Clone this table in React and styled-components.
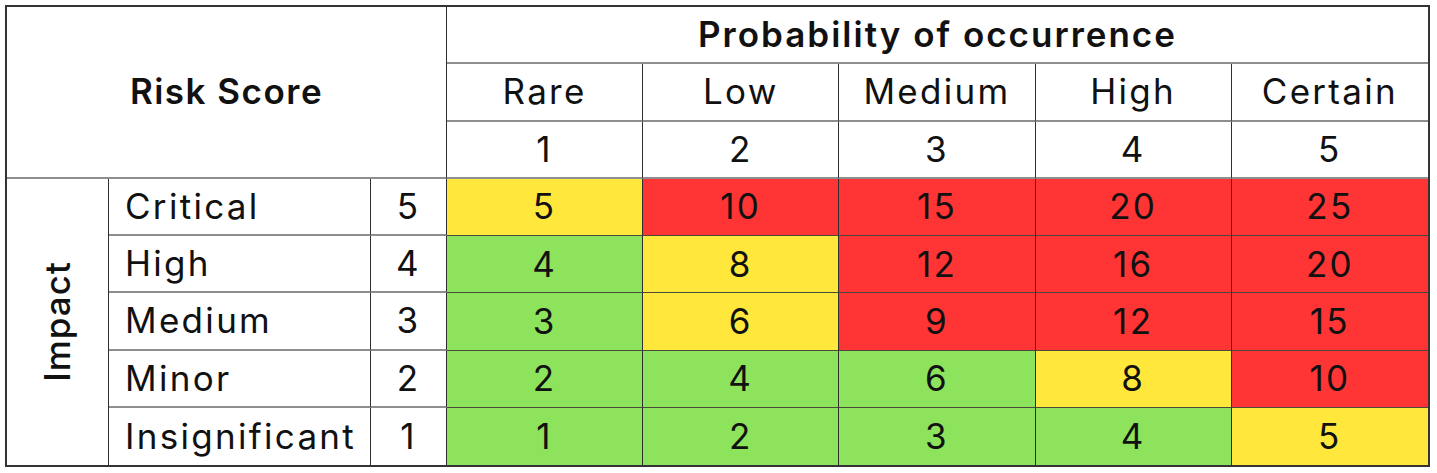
import React from "react";
import styled, { createGlobalStyle } from "styled-components";

const GlobalStyle = createGlobalStyle`
  html, body {
    margin: 0;
    padding: 0;
    background: #fff;
  }
  body {
    font-family: "Inter", "Liberation Sans", sans-serif;
    color: #111;
  }
`;

const Page = styled.div`
  padding: 5px 0 0 5px;
`;

const Matrix = styled.div`
  box-sizing: border-box;
  width: 1425px;
  height: 462px;
  border: 2px solid #333;
  display: grid;
  grid-template-columns: 102px 262px 76px repeat(5, 1fr);
  grid-template-rows: repeat(8, 1fr);
`;

const colors = {
  g: "#8ee35c",
  y: "#ffe83b",
  r: "#ff3434",
};

const Cell = styled.div`
  box-sizing: border-box;
  display: flex;
  align-items: center;
  justify-content: ${(p) => (p.$left ? "flex-start" : "center")};
  padding-left: ${(p) => (p.$left ? "16px" : "0")};
  background: ${(p) => (p.$tone ? colors[p.$tone] : "#fff")};
  border-right: ${(p) => (p.$lastCol ? "none" : "1px solid #2e2e2e")};
  border-bottom: ${(p) =>
    p.$lastRow ? "none" : p.$tone ? "1.5px solid #4a4a3a" : "2px solid #8e8e8e"};
  font-size: 35px;
  font-weight: 400;
  letter-spacing: 2.3px;
  line-height: 1;
  white-space: nowrap;
  grid-column: ${(p) => p.$col || "auto"};
  grid-row: ${(p) => p.$row || "auto"};
`;

const Title = styled(Cell)`
  font-weight: 600;
  letter-spacing: ${(p) => p.$spacing || "1.5px"};
`;

const Vertical = styled.span`
  display: inline-block;
  transform: rotate(-90deg);
  font-weight: 500;
  letter-spacing: 1px;
`;

const levels = ["Rare", "Low", "Medium", "High", "Certain"];

const impacts = [
  { label: "Critical", value: 5, tones: "yrrrr" },
  { label: "High", value: 4, tones: "gyrrr" },
  { label: "Medium", value: 3, tones: "gyrrr" },
  { label: "Minor", value: 2, tones: "gggyr" },
  { label: "Insignificant", value: 1, tones: "ggggy" },
];

export default function App() {
  return (
    <Page>
      <GlobalStyle />
      <Matrix>
        <Title $col="1 / 4" $row="1 / 4">Risk Score</Title>
        <Title $col="4 / 9" $row="1" $lastCol $spacing="2px">
          Probability of occurrence
        </Title>
        {levels.map((l, i) => (
          <Cell key={l} $row="2" $col={`${i + 4}`} $lastCol={i === 4}>
            {l}
          </Cell>
        ))}
        {levels.map((l, i) => (
          <Cell key={l + "n"} $row="3" $col={`${i + 4}`} $lastCol={i === 4}>
            {i + 1}
          </Cell>
        ))}
        <Cell $col="1" $row="4 / 9" $lastRow>
          <Vertical>Impact</Vertical>
        </Cell>
        {impacts.map((imp, r) => {
          const last = r === impacts.length - 1;
          const row = `${r + 4}`;
          return (
            <React.Fragment key={imp.label}>
              <Cell $left $col="2" $row={row} $lastRow={last}>
                {imp.label}
              </Cell>
              <Cell $col="3" $row={row} $lastRow={last}>
                {imp.value}
              </Cell>
              {levels.map((l, c) => (
                <Cell
                  key={l}
                  $col={`${c + 4}`}
                  $row={row}
                  $tone={imp.tones[c]}
                  $lastCol={c === 4}
                  $lastRow={last}
                >
                  {imp.value * (c + 1)}
                </Cell>
              ))}
            </React.Fragment>
          );
        })}
      </Matrix>
    </Page>
  );
}
